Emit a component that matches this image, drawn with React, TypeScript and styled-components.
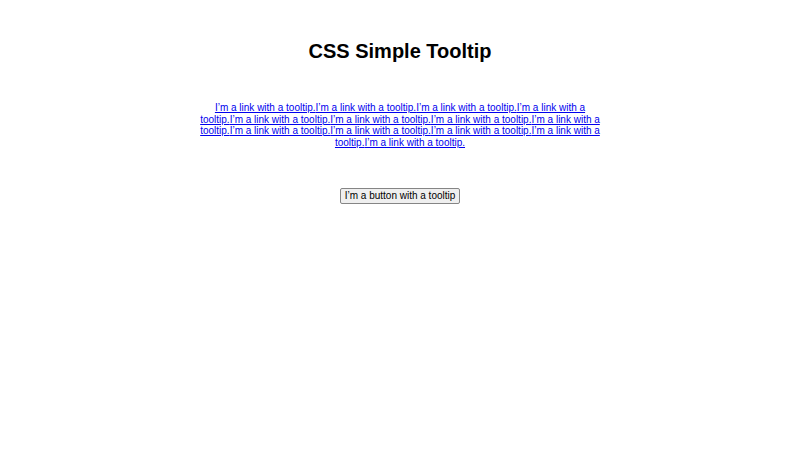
import React from 'react';
import styled, { createGlobalStyle } from 'styled-components';

const GlobalStyle = createGlobalStyle`
  html, body {
    margin: 0;
    padding: 0;
    background: #ffffff;
  }
  body {
    font-family: "Liberation Sans", Arial, sans-serif;
    font-size: 10px;
    color: #000000;
  }
`;

const Page = styled.main`
  display: flex;
  flex-direction: column;
  align-items: center;
  padding-top: 40px;
`;

const Title = styled.h1`
  margin: 0;
  font-size: 20px;
  line-height: 23px;
  font-weight: bold;
`;

const Paragraph = styled.p`
  width: 400px;
  margin: 39px 0 0;
  text-align: center;
  line-height: 11.5px;
`;

const TipLink = styled.a`
  color: #0000ee;
  text-decoration: underline;
  cursor: pointer;
`;

const TipButton = styled.button`
  margin-top: 40px;
  font-family: "Liberation Sans", Arial, sans-serif;
  font-size: 10px;
  line-height: 12px;
  padding: 1px 4px;
  background: #efefef;
  border: 1px solid #858585;
  border-radius: 2px;
  color: #000000;
  height: 16px;
  white-space: nowrap;
`;

const linkText = 'I\u2019m a link with a tooltip.';

const App = () => (
  <>
    <GlobalStyle />
    <Page>
      <Title>CSS Simple Tooltip</Title>
      <Paragraph>
        {Array.from({ length: 13 }).map((_, i) => (
          <TipLink key={`link-${i}`} title="Tooltip">
            {linkText}
          </TipLink>
        ))}
      </Paragraph>
      <TipButton title="Tooltip">I’m a button with a tooltip</TipButton>
    </Page>
  </>
);

export default App;
